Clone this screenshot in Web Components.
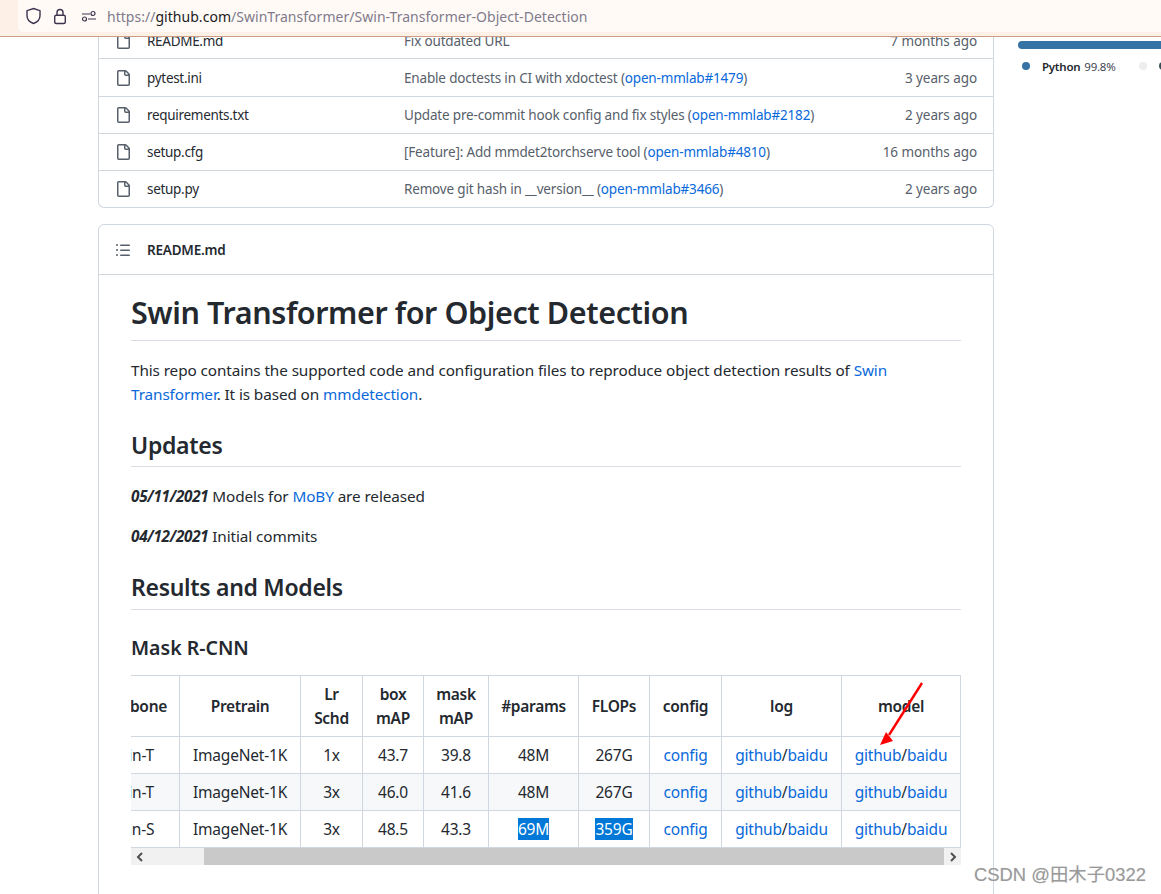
<!DOCTYPE html>
<html lang="en">
<head>
<meta charset="utf-8">
<title>Swin-Transformer-Object-Detection</title>
<style>
  html, body { margin: 0; height: 894px; overflow: hidden; background: #fff; }
  body { font-family: "Noto Sans", "Noto Sans CJK SC", sans-serif; color: #24292f; }
</style>
</head>
<body>
<repo-page></repo-page>
<browser-bar></browser-bar>
<csdn-mark></csdn-mark>

<script>
const FILE_ICON = `<svg width="16" height="16" viewBox="0 0 16 16" fill="#57606a"><path d="M2 1.75C2 .784 2.784 0 3.75 0h6.586c.464 0 .909.184 1.237.513l2.914 2.914c.329.328.513.773.513 1.237v9.586A1.75 1.75 0 0 1 13.25 16h-9.5A1.75 1.75 0 0 1 2 14.25Zm1.75-.25a.25.25 0 0 0-.25.25v12.5c0 .138.112.25.25.25h9.5a.25.25 0 0 0 .25-.25V6h-2.75A1.75 1.75 0 0 1 9 4.25V1.5Zm6.75.062V4.25c0 .138.112.25.25.25h2.688l-.011-.013-2.914-2.914-.013-.011Z"/></svg>`;
const LIST_ICON = `<svg width="16" height="16" viewBox="0 0 16 16" fill="#57606a"><path d="M5.75 2.5h8.5a.75.75 0 0 1 0 1.5h-8.5a.75.75 0 0 1 0-1.5Zm0 5h8.5a.75.75 0 0 1 0 1.5h-8.5a.75.75 0 0 1 0-1.5Zm0 5h8.5a.75.75 0 0 1 0 1.5h-8.5a.75.75 0 0 1 0-1.5ZM2 14a1 1 0 1 1 0-2 1 1 0 0 1 0 2Zm1-6a1 1 0 1 1-2 0 1 1 0 0 1 2 0ZM2 4a1 1 0 1 1 0-2 1 1 0 0 1 0 2Z"/></svg>`;

class BrowserBar extends HTMLElement {
  constructor() {
    super();
    this.attachShadow({ mode: 'open' });
    this.shadowRoot.innerHTML = `
      <style>
        :host { position: absolute; left: 0; top: 0; width: 1161px; height: 37px; box-sizing: border-box;
                background: #fdf1e7; border-bottom: 1px solid #c99d84; display: block; }
        .pill { margin-left: 18px; width: 1143px; height: 32px; background: #fffaf6; border-radius: 0 0 0 5px;
                display: flex; align-items: center; box-sizing: border-box; padding-left: 7px; }
        svg { flex: none; }
        .url { font-size: 14px; margin-left: 10px; color: #7f7a8c; white-space: nowrap; letter-spacing: .03px; }
        .url b { font-weight: 400; color: #1b1b22; }
      </style>
      <div class="pill">
        <svg width="17" height="18" viewBox="0 0 17 18" fill="none" stroke="#3d3450" stroke-width="1.4"><path d="M8.5 1.5 15 3.7v5c0 3.6-2.7 6.4-6.5 7.8C4.700 15.100 2 12.300 2 8.700v-5z"/></svg>
        <svg style="margin-left:11px" width="14" height="17" viewBox="0 0 14 17" fill="none" stroke="#3d3450" stroke-width="1.4"><rect x="1.700" y="7.200" width="10.600" height="8.300" rx="1.500"/><path d="M4 7V4.500a3 3 0 0 1 6 0V7"/></svg>
        <svg style="margin-left:14px" width="16" height="12" viewBox="0 0 16 12" fill="none" stroke="#3d3450" stroke-width="1.200"><path d="M1 4h8M7 9h8"/><circle cx="12" cy="3.500" r="2"/><circle cx="3.500" cy="9" r="2"/></svg>
        <span class="url">https://<b>github.com</b>/SwinTransformer/Swin-Transformer-Object-Detection</span>
      </div>`;
  }
}

class FileRow extends HTMLElement {
  constructor() {
    super();
    this.attachShadow({ mode: 'open' });
  }
  connectedCallback() {
    const name = this.getAttribute('name');
    const age = this.getAttribute('age');
    this.shadowRoot.innerHTML = `
      <style>
        :host { display: grid; grid-template-columns: 32px 257px 1fr auto; align-items: center; box-sizing: border-box;
                height: 37px; padding: 0 16px 0 16px; border-top: 1px solid #d0d7de; font-size: 13.5px; }
        :host(:first-child) { border-top: 0; height: 35px; }
        :host(:nth-child(2)) { height: 38px; }
        svg { display: block; }
        .name { letter-spacing: -.3px; }
        .msg { color: #57606a; white-space: nowrap; letter-spacing: -.17px; }
        .age { color: #57606a; letter-spacing: -.08px; }
        ::slotted(a) { color: #0969da; text-decoration: none; }
      </style>
      ${FILE_ICON}
      <span class="name">${name}</span>
      <span class="msg"><slot></slot></span>
      <span class="age">${age}</span>`;
  }
}

class FileList extends HTMLElement {
  constructor() {
    super();
    this.attachShadow({ mode: 'open' });
    this.shadowRoot.innerHTML = `
      <style>
        :host { display: block; border: 1px solid #d0d7de; border-top: 0; border-radius: 0 0 6px 6px; }
      </style>
      <slot></slot>`;
  }
}

class ReadmeBox extends HTMLElement {
  constructor() {
    super();
    this.attachShadow({ mode: 'open' });
    this.shadowRoot.innerHTML = `
      <style>
        :host { display: block; margin-top: 16px; border: 1px solid #d0d7de; border-radius: 6px; height: 800px; }
        header { display: flex; align-items: center; gap: 16px; height: 49px; padding-left: 16px; border-bottom: 1px solid #d0d7de;
                 font-size: 13.500px; font-weight: 600; letter-spacing: -.2px; }
        svg { display: block; }
        .body { padding: 0 32px; }
      </style>
      <header>${LIST_ICON}<span>README.md</span></header>
      <div class="body"><slot></slot></div>`;
  }
}

class MdHeading extends HTMLElement {
  constructor() {
    super();
    this.attachShadow({ mode: 'open' });
    this.shadowRoot.innerHTML = `
      <style>
        :host { display: block; font-weight: 600; }
        :host([level="1"]) { font-size: 30.500px; letter-spacing: -.4px; line-height: 40px; margin-top: 17px; padding-bottom: 8px; border-bottom: 1px solid #d8dee4; }
        :host([level="2"]) { font-size: 23px; letter-spacing: -.3px; line-height: 30px; margin-top: 24px; padding-bottom: 6px; border-bottom: 1px solid #d8dee4; }
        :host([level="3"]) { font-size: 19.500px; line-height: 25px; margin-top: 25px; }
      </style>
      <slot></slot>`;
  }
}

class MdPara extends HTMLElement {
  constructor() {
    super();
    this.attachShadow({ mode: 'open' });
    this.shadowRoot.innerHTML = `
      <style>
        :host { display: block; font-size: 15.300px; letter-spacing: -.1px; line-height: 24px; margin-top: 17px; }
        :host([tight]) { margin-top: 16px; }
        ::slotted(a) { color: #0969da; text-decoration: none; }
        ::slotted(b) { letter-spacing: -.3px; }
      </style>
      <slot></slot>`;
  }
}

class ResultsTable extends HTMLElement {
  constructor() {
    super();
    this.attachShadow({ mode: 'open' });
    const cols = [97, 121, 62, 61, 65, 90, 71, 72, 120, 119];
    const heads = ['Backbone', 'Pretrain', 'Lr<br>Schd', 'box<br>mAP', 'mask<br>mAP', '#params', 'FLOPs', 'config', 'log', 'model'];
    const rows = [
      ['Swin-T', '1x', '43.7', '39.8', '48M', '267G'],
      ['Swin-T', '3x', '46.0', '41.6', '48M', '267G'],
      ['Swin-S', '3x', '48.5', '43.3', '<mark>69M</mark>', '<mark>359G</mark>']
    ];
    const links = `<a>github</a>/<a>baidu</a>`;
    this.shadowRoot.innerHTML = `
      <style>
        :host { display: block; margin-top: 15px; position: relative; }
        .clip { overflow: hidden; width: 830px; }
        table { border-collapse: collapse; table-layout: fixed; width: 878px; margin-left: -49px; font-size: 15.500px; letter-spacing: -.2px; line-height: 24px; }
        th, td { border: 1px solid #d0d7de; text-align: center; padding: 0; }
        th { height: 60px; font-weight: 600; letter-spacing: -.3px; }
        td { height: 36px; }
        tr:nth-child(2n) td { background: #f6f8fa; }
        a { color: #0969da; }
        mark { background: #0078d7; color: #fff; display: inline-block; line-height: 22px; }
        .scroll { display: flex; height: 17px; background: #f1f1f1; align-items: center; }
        .arrow { width: 17px; display: flex; justify-content: center; flex: none; }
        .track { flex: 1; display: flex; height: 17px; }
        .gap { width: 56px; }
        .thumb { flex: 1; background: #c9c9c9; }
      </style>
      <div class="clip">
        <table>
          <colgroup>${cols.map(w => `<col style="width:${w}px">`).join('')}</colgroup>
          <thead><tr>${heads.map(h => `<th>${h}</th>`).join('')}</tr></thead>
          <tbody>
            ${rows.map(r => `
              <tr>
                <td>${r[0]}</td><td>ImageNet-1K</td><td>${r[1]}</td><td>${r[2]}</td><td>${r[3]}</td><td>${r[4]}</td><td>${r[5]}</td>
                <td><a>config</a></td><td>${links}</td><td>${links}</td>
              </tr>`).join('')}
          </tbody>
        </table>
      </div>
      <div class="scroll">
        <span class="arrow"><svg width="8" height="10" viewBox="0 0 8 10" fill="none" stroke="#505050" stroke-width="2"><path d="M6 1 2 5l4 4"/></svg></span>
        <div class="track"><span class="gap"></span><span class="thumb"></span></div>
        <span class="arrow"><svg width="8" height="10" viewBox="0 0 8 10" fill="none" stroke="#505050" stroke-width="2"><path d="m2 1 4 4-4 4"/></svg></span>
      </div>
      <svg style="position:absolute;left:740px;top:0" width="60" height="80" viewBox="0 0 60 80">
        <path d="M51 8 18 60" stroke="#f00" stroke-width="2.400" fill="none"/>
        <path d="M9 70 15 57 22 66z" fill="#f00"/>
      </svg>`;
  }
}

class LangBar extends HTMLElement {
  constructor() {
    super();
    this.attachShadow({ mode: 'open' });
    this.shadowRoot.innerHTML = `
      <style>
        :host { display: block; width: 160px; padding-top: 18px; font-size: 11.500px; letter-spacing: -.25px; }
        .bar { height: 8px; background: #3572a5; border-radius: 4px 0 0 4px; }
        .legend { display: flex; align-items: center; margin-top: 8px; padding-left: 4px; white-space: nowrap; height: 18px; }
        i { width: 8px; height: 8px; border-radius: 50%; flex: none; }
        b { font-weight: 600; margin-left: 12px; color: #24292f; }
        span { color: #3f4750; margin-left: 4px; }
      </style>
      <div class="bar"></div>
      <div class="legend">
        <i style="background:#3572a5"></i><b>Python</b><span>99.8%</span>
        <i style="background:#ededed;margin-left:24px"></i>
        <i style="background:#384d54;margin-left:12px"></i>
      </div>`;
  }
}

class RepoPage extends HTMLElement {
  constructor() {
    super();
    this.attachShadow({ mode: 'open' });
    this.shadowRoot.innerHTML = `
      <style>
        :host { display: flex; gap: 24px; padding: 23px 0 0 98px; width: 1161px; box-sizing: border-box; overflow: hidden; }
        main { width: 896px; flex: none; }
        aside { flex: none; }
      </style>
      <main><slot name="main"></slot></main>
      <aside><lang-bar></lang-bar></aside>`;
    this.innerHTML = `
      <div slot="main">
        <file-list>
          <file-row name="README.md" age="7 months ago">Fix outdated URL</file-row>
          <file-row name="pytest.ini" age="3 years ago">Enable doctests in CI with xdoctest (<a>open-mmlab#1479</a>)</file-row>
          <file-row name="requirements.txt" age="2 years ago">Update pre-commit hook config and fix styles (<a>open-mmlab#2182</a>)</file-row>
          <file-row name="setup.cfg" age="16 months ago">[Feature]: Add mmdet2torchserve tool (<a>open-mmlab#4810</a>)</file-row>
          <file-row name="setup.py" age="2 years ago">Remove git hash in __version__ (<a>open-mmlab#3466</a>)</file-row>
        </file-list>
        <readme-box>
          <md-heading level="1">Swin Transformer for Object Detection</md-heading>
          <md-para>This repo contains the supported code and configuration files to reproduce object detection results of <a>Swin Transformer</a>. It is based on <a>mmdetection</a>.</md-para>
          <md-heading level="2">Updates</md-heading>
          <md-para><b><i>05/11/2021</i></b> Models for <a>MoBY</a> are released</md-para>
          <md-para tight><b><i>04/12/2021</i></b> Initial commits</md-para>
          <md-heading level="2" style="padding-bottom:7px">Results and Models</md-heading>
          <md-heading level="3">Mask R-CNN</md-heading>
          <results-table></results-table>
        </readme-box>
      </div>`;
  }
}

class CsdnMark extends HTMLElement {
  constructor() {
    super();
    this.attachShadow({ mode: 'open' });
    this.shadowRoot.innerHTML = `
      <style>
        :host { position: absolute; left: 974px; top: 861px; font-size: 18.400px; line-height: 28px; white-space: nowrap;
                color: #9a9a9a; font-family: "Liberation Sans", "Noto Sans CJK SC", sans-serif;
                text-shadow: 0 0 1px #d8d8d8; }
      </style>
      CSDN @田木子0322`;
  }
}

customElements.define('browser-bar', BrowserBar);
customElements.define('file-row', FileRow);
customElements.define('file-list', FileList);
customElements.define('readme-box', ReadmeBox);
customElements.define('md-heading', MdHeading);
customElements.define('md-para', MdPara);
customElements.define('results-table', ResultsTable);
customElements.define('lang-bar', LangBar);
customElements.define('repo-page', RepoPage);
customElements.define('csdn-mark', CsdnMark);
</script>
</body>
</html>
